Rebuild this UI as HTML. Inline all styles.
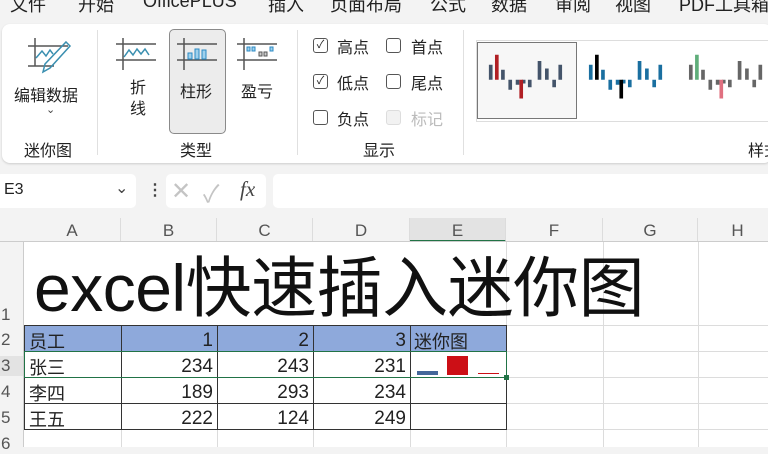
<!DOCTYPE html><html><head><meta charset="utf-8"><style>
*{margin:0;padding:0;box-sizing:border-box}
body{width:768px;height:447px;overflow:hidden;background:#f3f3f3;position:relative;font-family:"Liberation Sans","Noto Sans CJK SC",sans-serif;color:#222}
.a{position:absolute;white-space:nowrap}
.t{font-size:16px;color:#222}
.tb{position:absolute;top:-9px;font-size:18px;color:#222;white-space:nowrap}
.cb{position:absolute;width:15px;height:15px;border:1.3px solid #555;border-radius:3px;background:#fff}
.grid{position:absolute;left:0;top:218px;width:768px;height:229px;background:#fff}
.vl{position:absolute;top:242px;bottom:0;width:1px;background:#dcdcdc}
.hl{position:absolute;left:24px;right:0;height:1px;background:#dcdcdc}
.ch{position:absolute;top:218px;height:24px;font-size:17px;color:#555;text-align:center;line-height:26px;border-right:1px solid #dcdcdc;background:#f3f3f3}
.rh{position:absolute;left:0;width:24px;font-size:17px;color:#555;padding-left:1px}
.n{position:absolute;font-size:19px}
</style></head><body>
<div class="tb" style="left:10px">文件</div>
<div class="tb" style="left:78px">开始</div>
<div class="tb" style="left:143px">OfficePLUS</div>
<div class="tb" style="left:268px">插入</div>
<div class="tb" style="left:330px">页面布局</div>
<div class="tb" style="left:430px">公式</div>
<div class="tb" style="left:491px">数据</div>
<div class="tb" style="left:555px">审阅</div>
<div class="tb" style="left:615px">视图</div>
<div class="tb" style="left:679px">PDF工具箱</div>
<div class="a" style="left:2px;top:24px;width:770px;height:139px;background:#fff;border-radius:8px;box-shadow:0 1px 2px #ccc"></div>
<div class="a" style="left:97px;top:30px;width:1px;height:125px;background:#e0e0e0"></div>
<div class="a" style="left:297px;top:30px;width:1px;height:125px;background:#e0e0e0"></div>
<div class="a" style="left:463px;top:30px;width:1px;height:125px;background:#e0e0e0"></div>
<svg class="a" style="left:28px;top:36px" width="46" height="42"><g stroke="#555" stroke-width="1.5" fill="none"><path d="M7 2V30M0 10H40M0 30H26"/><path d="M8 22L14 15L18 20L22 14L25 18" stroke="#3a8fb0"/><path d="M38 6L42 10L22 32L15 36L17 28Z" stroke="#3a8fb0"/></g></svg>
<div class="a t" style="left:14px;top:82px">编辑数据</div>
<div class="a" style="left:46px;top:103px;font-size:11px;color:#444">⌄</div>
<div class="a t" style="left:24px;top:137px">迷你图</div>
<svg class="a" style="left:116px;top:38px" width="42" height="34"><g stroke="#555" stroke-width="1.5" fill="none"><path d="M7 0V32M0 6H40M0 22H40"/><path d="M8 19L13 12L17 17L21 11L25 16L29 11L33 17" stroke="#3a8fb0"/></g></svg>
<div class="a t" style="left:130px;top:78px;line-height:21px">折<br>线</div>
<div class="a" style="left:169px;top:29px;width:57px;height:105px;background:#ececec;border:1px solid #8a8a8a;border-radius:5px"></div>
<svg class="a" style="left:177px;top:38px" width="42" height="34"><g stroke="#555" stroke-width="1.5" fill="none"><path d="M7 0V32M0 6H40M0 22H40"/></g><g fill="#9ed0ec" stroke="#2b8ac4" stroke-width="1"><rect x="11" y="15" width="4" height="6"/><rect x="18" y="11" width="4" height="10"/><rect x="25" y="12" width="4" height="9"/></g></svg>
<div class="a t" style="left:180px;top:78px">柱形</div>
<svg class="a" style="left:237px;top:38px" width="42" height="34"><g stroke="#555" stroke-width="1.5" fill="none"><path d="M7 0V32M0 6H40M0 22H40"/></g><g fill="#9ed0ec" stroke="#2b8ac4" stroke-width="1"><rect x="10" y="9" width="3" height="4"/><rect x="15" y="9" width="3" height="4"/><rect x="33" y="9" width="3" height="4"/></g><g fill="#ccc" stroke="#555" stroke-width="1"><rect x="22" y="14" width="3" height="4"/><rect x="27" y="14" width="3" height="4"/></g></svg>
<div class="a t" style="left:241px;top:78px">盈亏</div>
<div class="a t" style="left:180px;top:137px">类型</div>
<div class="cb" style="left:313px;top:38px;font-size:11px;line-height:12px;text-align:center">✓</div><div class="a t" style="left:337px;top:34px">高点</div>
<div class="cb" style="left:386px;top:38px"></div><div class="a t" style="left:411px;top:34px">首点</div>
<div class="cb" style="left:313px;top:74px;font-size:11px;line-height:12px;text-align:center">✓</div><div class="a t" style="left:337px;top:70px">低点</div>
<div class="cb" style="left:386px;top:74px"></div><div class="a t" style="left:411px;top:70px">尾点</div>
<div class="cb" style="left:313px;top:110px"></div><div class="a t" style="left:337px;top:106px">负点</div>
<div class="cb" style="left:386px;top:110px;border-color:#ddd;background:#f2f2f2"></div><div class="a t" style="left:411px;top:106px;color:#bbb">标记</div>
<div class="a t" style="left:363px;top:137px">显示</div>
<div class="a" style="left:476px;top:40px;width:300px;height:82px;border:1px solid #ddd;border-right:none"></div>
<div class="a" style="left:477px;top:42px;width:100px;height:77px;border:1px solid #777;background:#f7f7f7"></div>
<svg class="a" style="left:480px;top:46px" width="290" height="60">
<defs><g id="s"><rect x="4" y="15" width="3" height="12"/><rect x="14" y="19" width="3" height="8"/><rect x="20" y="27" width="3" height="8"/><rect x="26" y="27" width="3" height="4"/><rect x="31" y="27" width="3" height="3"/><rect x="36" y="27" width="3" height="6"/><rect x="44" y="12" width="3" height="15"/><rect x="50" y="18" width="3" height="9"/><rect x="56" y="27" width="3" height="6"/><rect x="61" y="15" width="3" height="12"/></g></defs>
<g transform="translate(4,0) scale(1.22,1.25)">
<g fill="#44546a"><use href="#s"/></g>
<rect x="9" y="7" width="3" height="20" fill="#b01f24"/><rect x="29" y="27" width="3" height="15" fill="#b01f24"/>
<g fill="#1a6fa0" transform="translate(82,0)"><use href="#s"/><rect x="9" y="7" width="3" height="20" fill="#000"/><rect x="29" y="27" width="3" height="15" fill="#000"/></g>
<g fill="#666" transform="translate(164,0)"><use href="#s"/><rect x="9" y="7" width="3" height="20" fill="#5fae7a"/><rect x="29" y="27" width="3" height="15" fill="#e07080"/></g>
</g>
</svg>
<div class="a t" style="left:748px;top:137px">样式</div>
<div class="a" style="left:-4px;top:174px;width:140px;height:34px;background:#fff;border-radius:5px"></div>
<div class="a" style="left:4px;top:181px;font-size:16px">E3</div>
<div class="a" style="left:115px;top:178px;font-size:16px;color:#444">⌄</div>
<div class="a" style="left:147px;top:180px;font-size:16px;color:#444;font-weight:bold">⋮</div>
<div class="a" style="left:166px;top:174px;width:100px;height:34px;background:#fff;border-radius:5px"></div>
<div class="a" style="left:171px;top:177px;font-size:24px;color:#c4c4c4">✕</div>
<div class="a" style="left:203px;top:174px;font-size:24px;color:#c4c4c4">✓</div>
<div class="a" style="left:240px;top:177px;font-size:21px;font-style:italic;font-family:'Liberation Serif',serif;color:#444">fx</div>
<div class="a" style="left:273px;top:174px;width:500px;height:34px;background:#fff;border-radius:5px"></div>
<div class="grid"></div>
<div class="a" style="left:0;top:218px;width:24px;height:24px;background:#f3f3f3"></div>
<div class="ch" style="left:24px;width:97px">A</div>
<div class="ch" style="left:121px;width:96px">B</div>
<div class="ch" style="left:217px;width:96px">C</div>
<div class="ch" style="left:313px;width:97px">D</div>
<div class="ch" style="left:410px;width:96px;background:#e3e3e3;border-bottom:2px solid #217346">E</div>
<div class="ch" style="left:506px;width:97px">F</div>
<div class="ch" style="left:603px;width:95px">G</div>
<div class="ch" style="left:698px;width:80px">H</div>
<div class="a" style="left:0;top:241px;width:768px;height:1px;background:#ccc"></div>
<div class="a" style="left:0;top:242px;width:24px;height:205px;background:#f3f3f3;border-right:1px solid #ccc"></div>
<div class="vl" style="left:603px"></div><div class="vl" style="left:698px"></div><div class="vl" style="left:506px"></div>
<div class="vl" style="left:121px;top:429px"></div><div class="vl" style="left:217px;top:429px"></div><div class="vl" style="left:313px;top:429px"></div><div class="vl" style="left:410px;top:429px"></div>
<div class="hl" style="top:325px"></div><div class="hl" style="top:351px"></div><div class="hl" style="top:377px"></div><div class="hl" style="top:403px"></div><div class="hl" style="top:429px"></div>
<div class="rh" style="top:305px">1</div><div class="rh" style="top:330px">2</div><div class="rh" style="top:356px;background:#e3e3e3;width:23px">3</div><div class="rh" style="top:382px">4</div><div class="rh" style="top:408px">5</div><div class="rh" style="top:434px">6</div>
<div class="a" style="left:34px;top:253px;font-size:66px;line-height:70px;color:#111;letter-spacing:-0.5px">excel快速插入迷你图</div>
<div class="a" style="left:24px;top:325px;width:483px;height:27px;background:#8ea9db"></div>
<div class="a" style="left:24px;top:325px;width:483px;height:105px;border:1px solid #333"></div>
<div class="a" style="left:24px;top:351px;width:483px;height:1px;background:#333"></div>
<div class="a" style="left:24px;top:377px;width:483px;height:1px;background:#333"></div>
<div class="a" style="left:24px;top:403px;width:483px;height:1px;background:#333"></div>
<div class="a" style="left:121px;top:325px;width:1px;height:105px;background:#333"></div>
<div class="a" style="left:217px;top:325px;width:1px;height:105px;background:#333"></div>
<div class="a" style="left:313px;top:325px;width:1px;height:105px;background:#333"></div>
<div class="a" style="left:410px;top:325px;width:1px;height:105px;background:#333"></div>
<div class="a" style="font-size:18px;left:29px;top:328px">员工</div>
<div class="a" style="font-size:18px;left:29px;top:354px">张三</div>
<div class="a" style="font-size:18px;left:29px;top:380px">李四</div>
<div class="a" style="font-size:18px;left:29px;top:406px">王五</div>
<div class="a" style="font-size:18px;left:414px;top:328px">迷你图</div>
<div class="n" style="right:555px;top:330px">1</div><div class="n" style="right:459px;top:330px">2</div><div class="n" style="right:362px;top:330px">3</div>
<div class="n" style="right:555px;top:356px">234</div><div class="n" style="right:459px;top:356px">243</div><div class="n" style="right:362px;top:356px">231</div>
<div class="n" style="right:555px;top:382px">189</div><div class="n" style="right:459px;top:382px">293</div><div class="n" style="right:362px;top:382px">234</div>
<div class="n" style="right:555px;top:408px">222</div><div class="n" style="right:459px;top:408px">124</div><div class="n" style="right:362px;top:408px">249</div>
<div class="a" style="left:24px;top:351px;width:483px;height:27px;border:1.5px solid #217346"></div>
<div class="a" style="left:504px;top:375px;width:5px;height:5px;background:#217346"></div>
<div class="a" style="left:417px;top:371px;width:21px;height:4px;background:#44679a"></div>
<div class="a" style="left:447px;top:356px;width:21px;height:19px;background:#cc0f16"></div>
<div class="a" style="left:478px;top:373px;width:21px;height:1px;background:#cc0f16"></div>
</body></html>
